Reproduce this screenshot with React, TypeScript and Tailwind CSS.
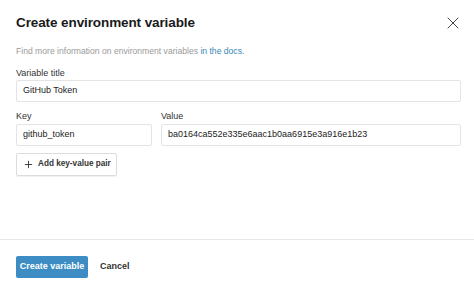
import { X, Plus } from "lucide-react";

const Field = ({ value, className }: { value: string; className?: string }) => (
  <div
    className={`h-[22px] border border-[#e4e4e4] rounded-[2px] px-[6px] flex items-center text-[9px] text-[#222] ${className ?? ""}`}
  >
    {value}
  </div>
);

export default function App() {
  return (
    <div
      className="w-[474px] h-[289px] bg-white flex flex-col overflow-hidden"
      style={{ fontFamily: '"Liberation Sans", Arial, sans-serif' }}
    >
      <div className="flex-1 px-4">
        {/* Header */}
        <div className="mt-[13px] h-[20px] flex items-center justify-between">
          <h1 className="text-[13.5px] font-bold text-[#1a1a1a] tracking-[-0.1px]">
            Create environment variable
          </h1>
          <button className="-mr-[5px] text-[#333]">
            <X size={20} strokeWidth={1.1} />
          </button>
        </div>

        <p className="mt-[12px] leading-[12px] text-[8.6px] text-[#9a9a9a]">
          Find more information on environment variables{" "}
          <span className="text-[#3a89b8]">in the docs.</span>
        </p>

        <div className="mt-[10px] leading-[12px] text-[9px] text-[#333]">
          Variable title
        </div>
        <Field value="GitHub Token" className="mt-[1px] w-[445px]" />

        <div className="mt-[8px] flex gap-[9px] w-[445px]">
          <div className="w-[136px]">
            <div className="leading-[12px] text-[9px] text-[#333]">Key</div>
            <Field value="github_token" className="mt-[2px]" />
          </div>
          <div className="flex-1">
            <div className="leading-[12px] text-[9px] text-[#333]">Value</div>
            <Field
              value="ba0164ca552e335e6aac1b0aa6915e3a916e1b23"
              className="mt-[2px]"
            />
          </div>
        </div>

        <button className="mt-[7px] h-[23px] whitespace-nowrap border border-[#dcdcdc] rounded-[2px] shadow-[0_1px_1px_rgba(0,0,0,0.06)] flex items-center gap-[4px] pl-[6px] pr-[5px] text-[8.2px] font-bold text-[#333]">
          <Plus size={11} strokeWidth={2} className="shrink-0" />
          Add key-value pair
        </button>
      </div>

      {/* Footer */}
      <div className="h-[50px] border-t border-[#e8e8e8] px-4 flex items-start">
        <button className="mt-[16px] h-[22px] w-[72px] whitespace-nowrap rounded-[2px] bg-[#3d8dc4] text-white text-[9px] font-bold">
          Create variable
        </button>
        <button className="mt-[16px] h-[22px] ml-[12px] text-[9px] font-bold text-[#333]">
          Cancel
        </button>
      </div>
    </div>
  );
}
